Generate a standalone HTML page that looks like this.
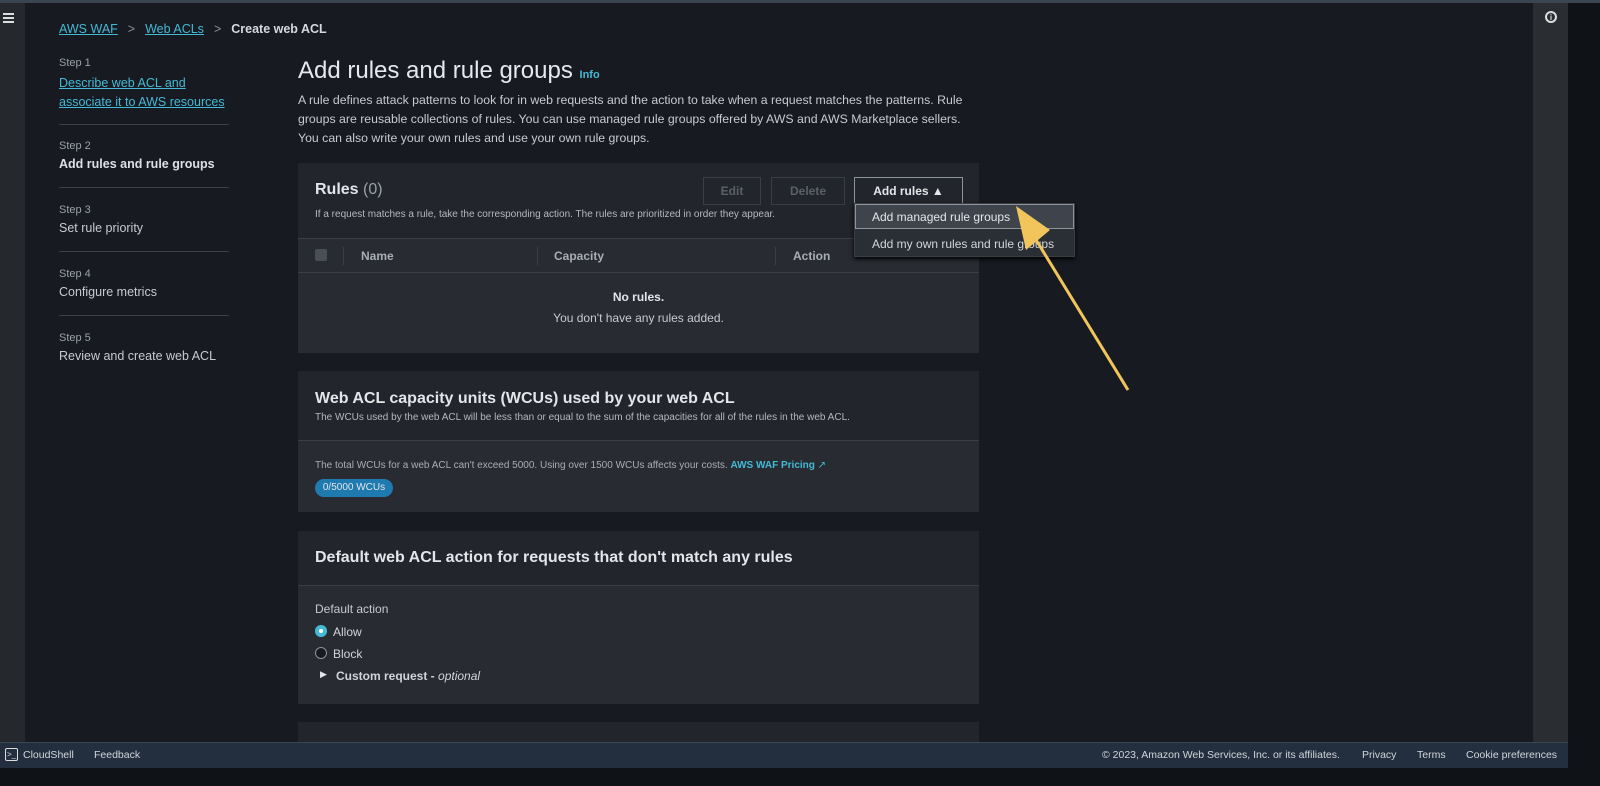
<!DOCTYPE html>
<html><head><meta charset="utf-8"><style>
*{margin:0;padding:0;box-sizing:border-box}
body{width:1600px;height:786px;background:#0f1216;font-family:"Liberation Sans",sans-serif;color:#d1d5db;position:relative;overflow:hidden;font-size:12px}
.a{position:absolute}
.main{left:25px;top:3px;width:1508px;height:739px;background:#171a20}
.lstrip{left:0;top:3px;width:25px;height:739px;background:#25282d}
.rstrip{left:1533px;top:3px;width:35px;height:739px;background:#2a2d32}
.top{left:0;top:0;width:1600px;height:3px;background:#3a4552}
.foot{left:0;top:742px;width:1568px;height:26px;background:#232f3e;border-top:1px solid #3b4654}
.lnk{color:#44b9d6;text-decoration:underline}
.panel{left:298px;width:681px;background:#22252b}
.sec{background:#282b31}
.hr{height:1px;background:#3a3e45}
.btn{border:1px solid #3a3e45;color:#5b6068;font-weight:bold;font-size:12px;text-align:center;line-height:26px;height:28px}
.step{left:59px;font-size:11px;color:#9ba1a8}
.st{left:59px;font-size:12.5px;color:#c7cbd0}
.sep{left:59px;width:170px;height:1px;background:#3a3e45}
</style></head><body>
<div class="a top"></div>
<div class="a main"></div>
<div class="a lstrip"></div>
<div class="a rstrip"></div>
<div class="a" style="left:3px;top:13px;width:11px;height:2px;background:#ddd;box-shadow:0 4px #ddd,0 8px #ddd"></div>
<div class="a" style="left:1545px;top:11px;width:12px;height:12px;border:2px solid #ddd;border-radius:50%;font-size:8px;font-weight:bold;color:#ddd;text-align:center;line-height:9px">i</div>

<div class="a" style="left:59px;top:22px;font-size:12.5px"><span class="lnk">AWS WAF</span><span style="color:#8d939a;margin:0 10px">&gt;</span><span class="lnk">Web ACLs</span><span style="color:#8d939a;margin:0 10px">&gt;</span><b style="color:#d5d9de">Create web ACL</b></div>

<div class="a step" style="top:57px">Step 1</div>
<div class="a st lnk" style="top:74px;line-height:19px;color:#44b9d6">Describe web ACL and<br>associate it to AWS resources</div>
<div class="a sep" style="top:124px"></div>
<div class="a step" style="top:140px">Step 2</div>
<div class="a st" style="top:157px;font-weight:bold;color:#dde1e5">Add rules and rule groups</div>
<div class="a sep" style="top:187px"></div>
<div class="a step" style="top:204px">Step 3</div>
<div class="a st" style="top:221px">Set rule priority</div>
<div class="a sep" style="top:251px"></div>
<div class="a step" style="top:268px">Step 4</div>
<div class="a st" style="top:285px">Configure metrics</div>
<div class="a sep" style="top:315px"></div>
<div class="a step" style="top:332px">Step 5</div>
<div class="a st" style="top:349px">Review and create web ACL</div>

<div class="a" style="left:298px;top:57px;font-size:24px;color:#e6e9ec">Add rules and rule groups <span style="font-size:11px;font-weight:bold;color:#44b9d6">Info</span></div>
<div class="a" style="left:298px;top:91px;width:680px;font-size:12.3px;line-height:19px;color:#c7cbd0">A rule defines attack patterns to look for in web requests and the action to take when a request matches the patterns. Rule groups are reusable collections of rules. You can use managed rule groups offered by AWS and AWS Marketplace sellers. You can also write your own rules and use your own rule groups.</div>

<!-- Rules panel -->
<div class="a panel" style="top:163px;height:190px">
 <div class="a" style="left:17px;top:18px;font-size:16px;font-weight:bold;color:#e3e6e9">Rules <span style="font-weight:normal;color:#9ba1a8">(0)</span></div>
 <div class="a" style="left:17px;top:46px;font-size:10px;color:#b4b9bf">If a request matches a rule, take the corresponding action. The rules are prioritized in order they appear.</div>
 <div class="a btn" style="left:405px;top:14px;width:58px">Edit</div>
 <div class="a btn" style="left:473px;top:14px;width:74px">Delete</div>
 <div class="a btn" style="left:556px;top:14px;width:109px;border-color:#8d939a;color:#e3e6e9">Add rules &#9650;</div>
 <div class="a sec" style="left:0;top:75px;width:681px;height:115px;border-top:1px solid #3a3e45">
  <div class="a" style="left:17px;top:10px;width:12px;height:12px;background:#4a4e55;border-radius:2px"></div>
  <div class="a" style="left:45px;top:8px;width:1px;height:18px;background:#3a3e45"></div>
  <div class="a" style="left:239px;top:8px;width:1px;height:18px;background:#3a3e45"></div>
  <div class="a" style="left:477px;top:8px;width:1px;height:18px;background:#3a3e45"></div>
  <div class="a" style="left:63px;top:10px;font-weight:bold;color:#a9aeb4">Name</div>
  <div class="a" style="left:256px;top:10px;font-weight:bold;color:#a9aeb4">Capacity</div>
  <div class="a" style="left:495px;top:10px;font-weight:bold;color:#a9aeb4">Action</div>
  <div class="a hr" style="left:0;top:33px;width:681px"></div>
  <div class="a" style="left:0;top:51px;width:681px;text-align:center;font-weight:bold;color:#e3e6e9">No rules.</div>
  <div class="a" style="left:0;top:72px;width:681px;text-align:center;color:#c7cbd0">You don't have any rules added.</div>
 </div>
</div>

<!-- dropdown -->
<div class="a" style="left:854px;top:203px;width:221px;height:54px;background:#2a2e35;border:1px solid #3a3e45;box-shadow:0 2px 4px #000"></div>
<div class="a" style="left:855px;top:204px;width:219px;height:25px;background:#3f444c;border:1px solid #8d939a"></div>
<div class="a" style="left:872px;top:210px;font-size:12px;color:#e3e6e9">Add managed rule groups</div>
<div class="a" style="left:872px;top:237px;font-size:12px;color:#d1d5db">Add my own rules and rule groups</div>
<svg class="a" style="left:1010px;top:200px" width="130" height="195"><line x1="118" y1="190" x2="20" y2="30" stroke="#f2c55c" stroke-width="3"/><polygon points="6,6 40,30 16,50" fill="#f2c55c"/></svg>

<!-- WCU panel -->
<div class="a panel" style="top:371px;height:141px">
 <div class="a" style="left:17px;top:19px;font-size:16px;font-weight:bold;color:#e3e6e9">Web ACL capacity units (WCUs) used by your web ACL</div>
 <div class="a" style="left:17px;top:41px;font-size:10px;color:#b4b9bf">The WCUs used by the web ACL will be less than or equal to the sum of the capacities for all of the rules in the web ACL.</div>
 <div class="a sec" style="left:0;top:69px;width:681px;height:72px;border-top:1px solid #3a3e45">
  <div class="a" style="left:17px;top:19px;font-size:10px;color:#a9aeb4">The total WCUs for a web ACL can't exceed 5000. Using over 1500 WCUs affects your costs. <b style="color:#44b9d6">AWS WAF Pricing</b> <span style="color:#44b9d6">&#x2197;</span></div>
  <div class="a" style="left:17px;top:38px;width:78px;height:18px;border-radius:9px;background:#1f7ab0;color:#e3e6e9;font-size:10px;text-align:center;line-height:18px">0/5000 WCUs</div>
 </div>
</div>

<!-- Default action panel -->
<div class="a panel" style="top:531px;height:173px">
 <div class="a" style="left:17px;top:18px;font-size:16px;font-weight:bold;color:#e3e6e9">Default web ACL action for requests that don't match any rules</div>
 <div class="a sec" style="left:0;top:54px;width:681px;height:119px;border-top:1px solid #3a3e45">
  <div class="a" style="left:17px;top:16px;color:#c7cbd0">Default action</div>
  <div class="a" style="left:17px;top:39px;width:12px;height:12px;border-radius:50%;background:#3aa0d6;border:3px solid #3aa0d6;box-shadow:inset 0 0 0 2px #fff"></div>
  <div class="a" style="left:17px;top:39px;width:12px;height:12px;border-radius:50%;background:#44b9d6"><div style="margin:4px;width:4px;height:4px;border-radius:50%;background:#fff"></div></div>
  <div class="a" style="left:35px;top:39px;color:#d1d5db">Allow</div>
  <div class="a" style="left:17px;top:61px;width:12px;height:12px;border-radius:50%;border:1px solid #8d939a;background:#171a20"></div>
  <div class="a" style="left:35px;top:61px;color:#d1d5db">Block</div>
  <div class="a" style="left:22px;top:83px;color:#e3e6e9;font-size:9px">&#9654;</div>
  <div class="a" style="left:38px;top:83px;color:#d1d5db;font-weight:bold">Custom request - <i style="font-weight:normal">optional</i></div>
 </div>
</div>
<div class="a panel" style="top:722px;height:20px"></div>

<div class="a foot">
 <div class="a" style="left:5px;top:5px;width:13px;height:13px;border:1px solid #ddd;border-radius:2px;font-size:8px;color:#ddd;line-height:11px;padding-left:1px">&gt;_</div>
 <div class="a" style="left:23px;top:6px;font-size:10.5px;color:#d1d5db">CloudShell</div>
 <div class="a" style="left:94px;top:6px;font-size:10.5px;color:#d1d5db">Feedback</div>
 <div class="a" style="left:1102px;top:6px;font-size:10.5px;color:#d1d5db">© 2023, Amazon Web Services, Inc. or its affiliates.</div>
 <div class="a" style="left:1362px;top:6px;font-size:10.5px;color:#d1d5db">Privacy</div>
 <div class="a" style="left:1417px;top:6px;font-size:10.5px;color:#d1d5db">Terms</div>
 <div class="a" style="left:1466px;top:6px;font-size:10.5px;color:#d1d5db">Cookie preferences</div>
</div>
</body></html>
